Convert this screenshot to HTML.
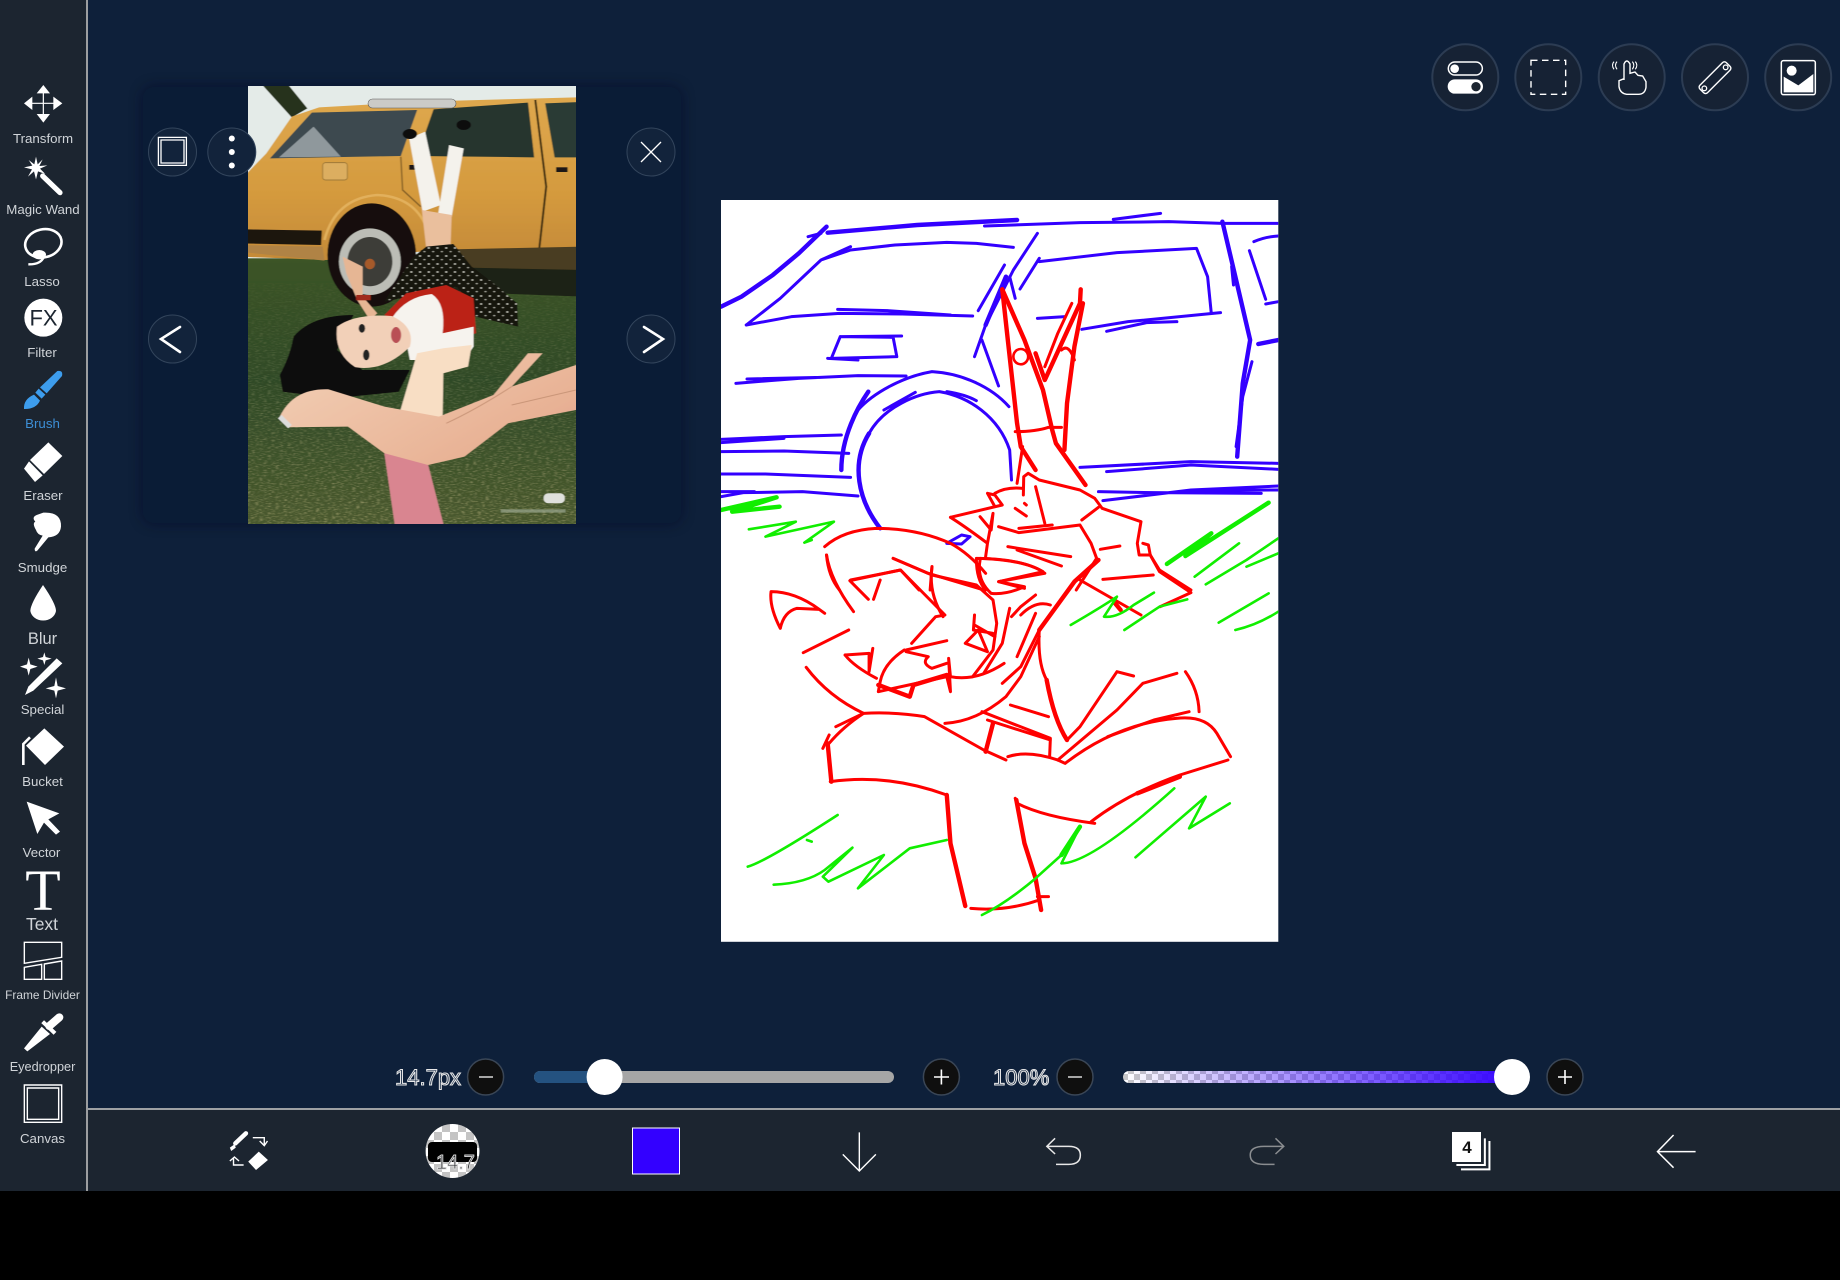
<!DOCTYPE html>
<html><head><meta charset="utf-8"><title>Drawing</title>
<style>
html,body{margin:0;padding:0;width:1840px;height:1280px;overflow:hidden;background:#000}
svg{position:absolute;left:0;top:0;display:block}
svg *{vector-effect:non-scaling-stroke}
text{font-family:"Liberation Sans",sans-serif}
.l{font-size:13.3px;fill:#d0d4d8;text-anchor:middle}
.o{font-size:22px;fill:#22344c;stroke:#e8e8e8;stroke-width:1px}
.b path{fill:none;stroke:#3300ff;stroke-width:3;stroke-linecap:round;stroke-linejoin:round}
.r path{fill:none;stroke:#ff0000;stroke-width:3;stroke-linecap:round;stroke-linejoin:round}
.g path{fill:none;stroke:#11ee00;stroke-width:2.6;stroke-linecap:round;stroke-linejoin:round}
.t{stroke-width:4.4 !important}
</style></head><body>
<svg width="1840" height="1280" viewBox="0 0 1840 1280" xmlns="http://www.w3.org/2000/svg">
<defs>
<clipPath id="cv"><rect x="721" y="200" width="557.3" height="741.8"/></clipPath>
<clipPath id="ph"><rect x="248" y="86" width="328" height="438"/></clipPath>
<filter id="bl" x="-5%" y="-5%" width="110%" height="110%"><feGaussianBlur stdDeviation="1.1"/></filter>
<filter id="sh" x="-10%" y="-10%" width="120%" height="120%"><feGaussianBlur stdDeviation="7"/></filter>
<filter id="tx" x="0" y="0" width="100%" height="100%"><feTurbulence type="fractalNoise" baseFrequency=".09 .28" numOctaves="2" seed="4"/><feColorMatrix values="0 0 0 0 .62  0 0 0 0 .54  0 0 0 0 .28  0 0 0 2 -.95"/></filter>
<linearGradient id="car" x1="0" y1="0" x2="0" y2="1"><stop offset="0" stop-color="#dfa84e"/><stop offset=".6" stop-color="#d49a3e"/><stop offset="1" stop-color="#c48a38"/></linearGradient>
<linearGradient id="gr" x1="0" y1="0" x2="0" y2="1"><stop offset="0" stop-color="#3c5426"/><stop offset=".45" stop-color="#2f4a27"/><stop offset="1" stop-color="#4b5a2e"/></linearGradient>
<linearGradient id="tg" x1="0" y1="0" x2="0" y2="1"><stop offset="0" stop-color="#fff" stop-opacity=".1"/><stop offset="1" stop-color="#fff" stop-opacity=".7"/></linearGradient>
<mask id="tm"><rect x="300" y="640" width="950" height="735" fill="url(#tg)"/></mask>
<linearGradient id="skin" x1="0" y1="0" x2="1" y2="1"><stop offset="0" stop-color="#f3d0b6"/><stop offset=".6" stop-color="#e8b295"/><stop offset="1" stop-color="#d98690"/></linearGradient>
<linearGradient id="op" x1="0" y1="0" x2="1" y2="0"><stop offset="0" stop-color="#3300ff" stop-opacity="0"/><stop offset="1" stop-color="#3300ff"/></linearGradient>
<pattern id="dots" width="24" height="24" patternUnits="userSpaceOnUse"><rect width="24" height="24" fill="#14140e"/><circle cx="6" cy="6" r="3" fill="#bdbdb2"/><circle cx="18" cy="17" r="2.6" fill="#a5a59a"/></pattern>
<pattern id="chk" width="12" height="12" patternUnits="userSpaceOnUse"><rect width="12" height="12" fill="#fff"/><rect width="6" height="6" fill="#c8c8c8"/><rect x="6" y="6" width="6" height="6" fill="#c8c8c8"/></pattern>
<pattern id="chk2" width="16" height="16" patternUnits="userSpaceOnUse" x="426" y="1124"><rect width="16" height="16" fill="#fff"/><rect width="8" height="8" fill="#c4c4c4"/><rect x="8" y="8" width="8" height="8" fill="#c4c4c4"/></pattern>
<clipPath id="sl2"><rect x="1123" y="1071" width="395" height="12" rx="6"/></clipPath>
</defs>

<!-- backgrounds -->
<rect width="1840" height="1191" fill="#0e203a"/>
<rect x="0" y="1191" width="1840" height="89" fill="#000"/>
<rect x="88" y="1110" width="1752" height="81" fill="#1c2530"/>
<rect x="88" y="1108" width="1752" height="2" fill="#9ea1a4"/>
<rect x="0" y="0" width="86" height="1191" fill="#1c2530"/>
<rect x="86" y="0" width="2" height="1191" fill="#9c9ea0"/>

<!-- reference panel -->
<rect x="143" y="87" width="538" height="436" rx="11" fill="#050f20" opacity=".55" filter="url(#sh)"/>
<rect x="143" y="87" width="538" height="436" rx="11" fill="#0a1c36"/>
<g clip-path="url(#ph)"><g transform="translate(130,70) scale(.3635,.3333)"><g filter="url(#bl)">
<rect x="300" y="30" width="950" height="1350" fill="#e4ebe8"/>
<rect x="300" y="565" width="950" height="810" fill="url(#gr)"/>
<g mask="url(#tm)"><rect x="300" y="640" width="950" height="735" filter="url(#tx)"/></g>
<polygon points="360,40 432,40 488,115 445,142" fill="#27301f"/>
<polygon points="300,335 375,250 445,140 520,112 800,95 1227,82 1250,82 1250,565 930,550 800,545 540,570 300,560" fill="url(#car)"/>
<polygon points="385,265 500,128 790,120 745,258" fill="#3d4a50"/>
<polygon points="410,262 505,170 580,260" fill="#8f989c"/>
<polygon points="835,118 1095,98 1112,262 790,258" fill="#27342f"/>
<polygon points="1142,100 1240,96 1240,262 1168,262" fill="#2c3b36"/>
<path d="M1115 90 L1145 350 L1125 545" fill="none" stroke="#3a2a10" stroke-width="2"/>
<path d="M745 260 L750 360 L800 410" fill="none" stroke="#8a6428" stroke-width="1.5"/>
<rect x="530" y="278" width="68" height="52" rx="8" fill="#dcae60" stroke="#a07a38" stroke-width="1"/>
<rect x="768" y="285" width="28" height="14" fill="#1c1812"/><rect x="1172" y="292" width="32" height="14" fill="#1c1812"/>
<polygon points="300,478 528,482 526,525 300,520" fill="#1d1610"/>
<polygon points="300,525 530,530 535,572 300,545" fill="#b08344"/>
<polygon points="800,540 1250,530 1250,620 1000,610 800,590" fill="#4a3d20"/>
<polygon points="780,590 1250,600 1250,680 1000,670 760,680" fill="#1c2013"/>
<path d="M535 510 Q565 385 680 375 Q780 380 815 470" fill="none" stroke="#e2b05c" stroke-width="2.6"/>
<ellipse cx="665" cy="555" rx="122" ry="155" fill="#14110c"/>
<ellipse cx="660" cy="575" rx="85" ry="100" fill="#bcbdb6"/>
<ellipse cx="660" cy="575" rx="62" ry="74" fill="#3c3c38"/>
<ellipse cx="660" cy="582" rx="14" ry="16" fill="#a65a2c"/>
<polygon points="768,205 812,185 855,405 805,425" fill="#f4f2ec"/>
<polygon points="878,225 918,235 885,440 848,430" fill="#f4f2ec"/>
<ellipse cx="770" cy="192" rx="20" ry="15" fill="#111"/><ellipse cx="918" cy="165" rx="20" ry="15" fill="#111"/>
<polygon points="803,420 885,435 882,525 815,535" fill="#eabf9d"/>
<polygon points="815,530 890,522 940,590 1000,640 1065,700 1068,770 950,740 900,650 700,695 780,560" fill="url(#dots)"/>
<polygon points="700,735 760,670 870,645 945,685 952,790 820,835 760,760" fill="#bb2418"/>
<path d="M722 742 Q760 680 830 672 Q870 700 860 790 L945 770 L945 830 L920 870 L770 870 L750 760Z" fill="#f6f3ee"/>
<path d="M585 560 L640 590 L640 680 L680 730 L660 750 L625 690 L595 610Z" fill="#e6b694"/>
<rect x="622" y="675" width="40" height="16" fill="#a02a1e"/>
<path d="M450 800 Q500 735 615 735 L570 840 L640 900 L770 900 L740 965 L560 985 L420 965 L412 915 Q440 860 450 800Z" fill="#0f0c0c"/>
<path d="M570 770 Q620 730 720 738 Q785 770 770 830 Q700 905 620 892 Q560 850 570 770Z" fill="#f2d0b8"/>
<ellipse cx="638" cy="775" rx="9" ry="13" fill="#222"/><ellipse cx="650" cy="855" rx="9" ry="16" fill="#222"/>
<ellipse cx="732" cy="795" rx="14" ry="24" fill="#b94f55"/>
<path d="M790 850 L862 835 L940 825 L930 890 L862 910 L860 1045 L740 1035Z" fill="#f8dec4"/>
<path d="M412 1040 Q450 955 545 958 L700 1010 L850 1040 L1000 975 L1095 850 L1135 850 L1050 950 L1227 885 L1250 900 L1250 1015 L1040 1060 L920 1160 L820 1185 L865 1375 L730 1375 L700 1150 L600 1070 L435 1072Z" fill="url(#skin)"/>
<path d="M700 1150 L820 1185 L865 1375 L730 1375Z" fill="#d98590"/>
<path d="M1050 950 Q950 1020 870 1060 M1227 960 L1050 1005" fill="none" stroke="#c99578" stroke-width="1"/>
<path d="M412 1040 L440 1070" stroke="#dcdcdc" stroke-width="5" fill="none"/>
<rect x="1138" y="1270" width="58" height="30" rx="13" fill="#dfe0dc"/>
<rect x="1020" y="1318" width="178" height="10" fill="#a9b4a0" opacity=".6"/>
</g></g></g>
<rect x="368" y="99" width="88" height="9" rx="4.5" fill="#cbcbc7" stroke="#5a5a58" stroke-width=".6"/>
<g fill="#12233b" stroke="#33455c" stroke-width="1">
<circle cx="172.5" cy="152" r="24"/><circle cx="231.8" cy="152" r="24"/><circle cx="651" cy="152" r="24"/><circle cx="172.5" cy="339" r="24"/><circle cx="651" cy="339" r="24"/>
</g>
<g fill="none" stroke="#fff">
<rect x="158.4" y="137.4" width="28" height="28" stroke-width="1.3"/><rect x="161" y="140" width="23" height="23" stroke-width="1.3"/>
<path d="M641 142 L661 162 M661 142 L641 162" stroke-width="1.3"/>
<path d="M180 327 L161 339 L180 352" stroke-width="2.6" stroke-linecap="round"/>
<path d="M644 327 L663 339 L644 352" stroke-width="2.6" stroke-linecap="round"/>
</g>
<circle cx="231.8" cy="138.5" r="3" fill="#fff"/><circle cx="231.8" cy="152" r="3" fill="#fff"/><circle cx="231.8" cy="165.5" r="3" fill="#fff"/>

<!-- top-right toolbar -->
<g fill="#162234" stroke="#2c3c53" stroke-width="2">
<circle cx="1465.3" cy="77.3" r="33"/><circle cx="1548.3" cy="77.3" r="33"/><circle cx="1631.7" cy="77.3" r="33"/><circle cx="1715" cy="77.3" r="33"/><circle cx="1798.2" cy="77.3" r="33"/>
</g>
<g transform="translate(1400,30) scale(.33333)">
<rect x="145" y="96" width="102" height="39" rx="19.5" fill="none" stroke="#fff" stroke-width="1.5"/>
<circle cx="164" cy="116" r="13" fill="#fff"/>
<rect x="143" y="148" width="106" height="43" rx="21.5" fill="#fff"/>
<circle cx="228" cy="170" r="14" fill="#1c2530"/>
<path d="M393 91 H497 V193 H393Z" fill="none" stroke="#fff" stroke-width="1.4" stroke-dasharray="6.5 4.5"/>
<path d="M672 150 V102 Q680 84 690 102 V130 L705 126 L714 136 L728 138 L738 155 V172 Q735 193 715 193 H680 Q660 190 657 170 V152 L672 146" fill="none" stroke="#fff" stroke-width="1.4"/>
<path d="M651 95 Q642 105 651 118 M642 95 Q633 105 642 118 M697 95 Q706 105 697 118 M706 95 Q715 105 706 118" fill="none" stroke="#fff" stroke-width="1.1"/>
<rect x="-56" y="-16" width="112" height="32" rx="8" transform="translate(945,143) rotate(-45)" fill="none" stroke="#fff" stroke-width="1.4"/>
<circle cx="913" cy="175" r="7" fill="none" stroke="#fff" stroke-width="1.3"/><circle cx="977" cy="112" r="7" fill="none" stroke="#fff" stroke-width="1.3"/>
<rect x="1144" y="92" width="102" height="102" rx="6" fill="none" stroke="#fff" stroke-width="1.5"/>
<circle cx="1175" cy="122" r="15" fill="#fff"/>
<path d="M1151 187 V140 L1195 166 L1240 132 V187Z" fill="#fff"/>
</g>

<!-- side toolbar icons -->
<g fill="#fff" stroke="none">
<g transform="translate(0,60) scale(.33333)">
<path d="M130 75 L150 100 L110 100Z M130 188 L110 162 L150 162Z M72 130 L97 110 L97 150Z M187 130 L160 110 L160 150Z"/>
<path d="M130 95 V165 M95 130 H165" stroke="#fff" stroke-width="1.2" fill="none"/>
<path d="M108 290 L113 313 L128 298 L118 318 L142 316 L120 326 L136 342 L114 334 L108 358 L102 334 L84 350 L96 328 L72 322 L97 317 L86 300 L103 313Z"/>
<path d="M128 348 L180 398" stroke="#fff" stroke-width="5.2" stroke-linecap="round" fill="none"/>
<ellipse cx="130" cy="550" rx="55" ry="42" transform="rotate(-12 130 550)" fill="none" stroke="#fff" stroke-width="2.6"/>
<ellipse cx="118" cy="584" rx="20" ry="14"/>
<path d="M85 613 Q122 614 132 590" fill="none" stroke="#fff" stroke-width="2.4"/>
<circle cx="130" cy="773" r="57"/>
<path d="M172 933 Q190 930 186 948 L140 1000 L120 982Z" fill="#3d9ded"/>
<path d="M116 986 L136 1004 L125 1016 L106 998Z" fill="#3d9ded"/>
<path d="M72 1047 Q70 1018 102 1004 L120 1022 Q108 1048 72 1047Z" fill="#3d9ded"/>
<path d="M145 1147 L187 1188 L132 1242 L90 1200Z"/>
<path d="M87 1204 L128 1246 L105 1266 L72 1226Z"/>
</g>
<g transform="translate(0,480) scale(.33333)">
<path d="M130 98 Q185 95 183 140 Q180 170 145 172 L112 212 Q104 218 104 206 L128 167 Q112 164 108 150 Q96 130 106 125 Q94 112 110 105Z"/>
<path d="M129 315 Q168 372 168 393 A39 34 0 0 1 91 393 Q91 372 129 315Z"/>
<path d="M170 535 L187 550 L100 632 L75 645 L85 620Z"/>
<path d="M86 533 L91 553 L113 560 L91 567 L86 587 L81 567 L60 560 L81 553Z M133 517 L137 531 L155 536 L137 541 L133 555 L129 541 L112 536 L129 531Z M168 592 L173 618 L198 625 L173 632 L168 655 L163 632 L137 625 L163 618Z"/>
<path d="M133 745 L192 800 L135 855 L78 797Z"/>
<path d="M70 855 V792 L90 772" fill="none" stroke="#fff" stroke-width="2.6"/>
<path d="M80 965 L178 1000 L145 1018 L180 1055 L168 1064 L132 1028 L112 1062Z"/>
</g>
<g transform="translate(0,880) scale(.33333)" fill="none" stroke="#fff" stroke-width="1.4">
<path d="M73 187 H185 V232 L73 250Z M73 262 L125 253 V298 H73Z M133 252 L185 243 V298 H133Z"/>
<path d="M72 505 L125 440 L150 462 L82 514Z" fill="#fff" stroke="none"/>
<path d="M128 425 L165 460" stroke-width="4"/>
<path d="M148 438 L178 412" stroke-width="8" stroke-linecap="round"/>
<rect x="73" y="615" width="112" height="112"/>
<rect x="82" y="624" width="94" height="94"/>
</g>
</g>
<text x="43" y="910" text-anchor="middle" style="font-family:'Liberation Serif',serif;font-size:58px" fill="#fff">T</text>
<text x="43.5" y="325.5" text-anchor="middle" font-size="22" fill="#1c2530">FX</text>
<text class="l" x="43" y="143">Transform</text>
<text class="l" x="43" y="214">Magic Wand</text>
<text class="l" x="42" y="286">Lasso</text>
<text class="l" x="42" y="357">Filter</text>
<text class="l" x="42.5" y="428" style="fill:#3d8fd6">Brush</text>
<text class="l" x="43" y="500">Eraser</text>
<text class="l" x="42.5" y="572">Smudge</text>
<text class="l" x="42.5" y="644" style="font-size:16.5px">Blur</text>
<text class="l" x="42.5" y="714">Special</text>
<text class="l" x="42.5" y="786">Bucket</text>
<text class="l" x="41.5" y="857">Vector</text>
<text class="l" x="42" y="930" style="font-size:17.5px">Text</text>
<text class="l" x="42.5" y="999" style="font-size:11.9px">Frame Divider</text>
<text class="l" x="42.5" y="1071" style="font-size:12.7px">Eyedropper</text>
<text class="l" x="42.5" y="1143">Canvas</text>

<!-- canvas -->
<rect x="721" y="200" width="557.3" height="741.8" fill="#fff"/>
<g clip-path="url(#cv)">
<g transform="translate(710,190) scale(.36996,.33333)">
<g class="b">
<path class="t" d="M318 128 L560 105 L830 90"/>
<path d="M742 108 L1000 98 L1240 95 L1385 100 L1536 100 M1090 88 L1218 70"/>
<path class="t" d="M30 350 L85 320 L170 255 L240 190 L315 110"/><path d="M265 140 L300 130"/>
<path d="M98 405 L190 325 L300 210 L380 170"/>
<path d="M305 208 L380 180 L500 165 L640 157 L720 160 L820 172"/>
<path d="M98 405 L220 380 L350 370 L520 372 L710 378 M345 358 L480 362 L650 375"/>
<path d="M352 440 L328 505 L505 500 L495 442 L352 440 L518 438 M318 505 L400 510"/>
<path d="M70 580 L240 565 L400 557 L530 558 M100 567 L300 562"/>
<path class="t" d="M355 840 C355 740 400 650 428 605"/>
<path d="M400 660 C440 610 520 560 600 545 C680 550 760 590 808 650"/>
<path class="t" d="M460 1015 C400 930 380 820 430 730"/>
<path d="M430 730 C470 650 560 610 620 605 C700 620 780 680 810 780 L815 870 M470 660 L555 607 M640 605 C670 610 700 620 720 632"/>
<path d="M30 748 L200 740 L355 735 M30 758 L200 745 M30 785 L200 783 L375 790 M30 852 L150 852 L380 862 M30 920 L90 908 L250 905 L400 918 M30 905 L120 905"/>
<path d="M890 215 L1100 188 L1315 175 L1345 260 L1355 370 M885 385 L960 380 M1005 418 L1130 395 L1380 368 M1072 424 L1180 398 L1262 395"/>
<path class="t" d="M1385 95 L1420 260 L1460 450 L1440 580 L1425 800"/>
<path d="M1410 230 L1415 285 M1465 515 L1440 620 L1422 770"/>
<path d="M1470 155 Q1500 140 1536 138 M1458 182 L1502 328 M1502 342 L1536 335"/>
<path class="t" d="M1482 462 L1536 450"/>
<path d="M885 130 L820 240 L745 405 L715 500 M796 225 L725 362 M890 205 L838 297 M735 450 L780 588 M810 260 L825 325"/>
<path class="t" d="M800 260 L745 405"/>
<path d="M1000 832 L1300 815 L1536 820 M1072 845 L1300 825 L1536 838 M1050 905 L1200 908 L1490 910 M1062 932 L1300 900 L1536 888 M1300 902 L1536 900"/>
<path d="M640 1060 L680 1035 L703 1040 L680 1062Z"/>
</g>
<g class="g">
<path class="t" d="M30 960 L180 922 L60 965 L188 950"/>
<path d="M105 1018 L232 995 L150 1040 L335 995 L255 1058 L275 1050"/>
<path class="t" d="M1235 1122 L1355 1030 L1285 1098 L1510 938"/>
<path d="M1310 1160 L1430 1060 M1340 1183 L1450 1110 L1536 1045 M1450 1130 L1536 1090"/>
</g>
<g class="r">
<path class="t" d="M790 298 L805 450 L830 700 L840 770 L880 840"/>
<path class="t" d="M790 298 L850 450 L900 600 L925 720 L935 760 L1015 885"/>
<path class="t" d="M1002 298 L1000 340 L905 570 L880 490"/>
<path d="M978 340 L940 430 L905 530"/>
<path class="t" d="M1008 340 L985 470 L965 640 L958 780"/>
<path d="M825 725 Q880 725 915 712 L950 712"/>
<ellipse cx="840" cy="500" rx="20" ry="23" fill="none" stroke="#f00" stroke-width="2.6"/>
<path d="M950 480 Q970 460 985 510"/>
<path d="M845 770 L830 880"/>
<path d="M847 915 L848 860 L860 850 L890 870 L1000 900 L1040 925 L1060 955 L1165 995 L1155 1060 L1160 1095 L1190 1095 L1185 1065 L1170 1060"/>
<path d="M1190 1095 L1215 1140 L1300 1200 M880 890 L905 1000 M1050 952 L1005 990"/>
<path d="M650 982 L790 945 L770 915 L750 910 L770 950 M770 910 Q800 890 845 895"/>
<path d="M650 982 Q690 1010 750 1060 L745 1100 M730 980 L760 1020 L765 970 L750 1060"/>
<path d="M780 1010 L835 1028 L1000 1005 L1030 1060 L1045 1105 L990 1200 M835 1015 L925 1005"/>
<path d="M1055 1078 L1108 1068 M825 955 L855 978 M850 940 L855 945 M805 1070 L975 1100 M830 1080 L950 1128 M1062 1168 L1198 1155"/>
<path d="M720 1105 C800 1105 870 1120 905 1150 L780 1175 L850 1195 M720 1105 Q720 1170 745 1200"/>
<path d="M310 1070 Q360 1020 450 1015 Q560 1015 650 1060 Q700 1090 745 1150"/>
<path d="M315 1095 Q320 1160 350 1200 M495 1105 L590 1150 L740 1200 M380 1170 L515 1140 L565 1200 M600 1130 L595 1200"/>
</g>
</g>
<g transform="translate(710,550) scale(.36996,.33333)">
<g class="r">
<path d="M315 15 Q325 90 388 185"/>
<path d="M378 92 L515 60 L635 195 L610 200 L545 280 M378 92 L428 148 M460 90 L442 148"/>
<path d="M495 25 L600 75 L720 105 L765 150 L775 220 L765 300 L710 380 M600 50 Q590 130 630 200"/>
<path d="M730 30 Q720 90 760 130 Q800 135 850 110 L780 95 L900 65 Q850 30 730 25"/>
<path class="t" d="M1050 30 L985 95 L890 240"/>
<path d="M890 240 Q885 340 910 390"/>
<path class="t" d="M910 390 Q930 510 965 570"/>
<path d="M965 570 L1000 530 L1100 365 L1145 378 M1000 90 L1165 195"/>
<path d="M715 195 L712 240 L765 250 M715 225 L770 260 M690 280 L750 305 L725 240 L690 280"/>
<path d="M810 175 L790 280 L740 370 M880 135 L840 170 L815 200 M840 195 Q880 150 920 165 M880 190 L830 320 M890 240 L840 350 L790 400"/>
<path d="M252 308 L375 240 M190 235 Q160 170 165 125 Q230 125 295 178 L235 175 Q200 185 190 235 M295 178 L310 190"/>
<path d="M365 315 Q390 350 450 385 M365 315 L430 310 L430 365 M440 295 L430 365"/>
<path d="M530 300 L640 272 M525 300 Q470 340 460 395 L455 425 L640 380 L650 425 L645 325 L650 380 Q720 395 795 340 M530 305 L590 320 Q570 340 600 355 L640 340"/>
<path class="t" d="M455 405 L540 440 L550 405 L640 375"/>
<path d="M260 352 Q320 440 415 490 M340 530 L415 490 Q500 485 580 500 L740 600 L800 630"/>
<path d="M322 555 L305 595 M415 490 Q360 530 322 580"/>
<path class="t" d="M318 580 L328 695"/>
<path d="M325 695 Q480 670 640 735"/>
<path class="t" d="M640 735 L650 880 L690 1068"/>
<path d="M705 1075 Q800 1085 890 1050"/>
<path class="t" d="M828 750 L850 880 L880 985 L895 1080"/>
<path d="M885 1040 L915 1040 M825 745 L830 760 Q900 800 1040 820"/>
<path d="M1030 815 Q1130 730 1270 675 L1400 630"/>
<path class="t" d="M1155 730 L1270 680"/>
<path d="M635 520 Q720 515 800 440 L840 380 L890 260"/>
<path d="M735 485 L920 565 L918 620 M750 510 L920 570"/>
<path class="t" d="M765 520 L745 605"/>
<path d="M805 620 Q860 600 940 630 L960 640 M960 640 Q1100 520 1260 505 Q1340 495 1370 550 L1407 620"/>
<path d="M940 630 L1100 480 L1170 400 L1262 370 M1075 560 L1200 510 L1295 485 M1285 365 Q1320 420 1322 485 M812 465 L915 500"/>
<path d="M1217 170 L1300 128 L1215 65 L1190 15"/>
<path class="t" d="M1095 160 L1110 180"/>
</g>
<g class="g">
<path d="M975 225 Q1060 170 1100 140 L1065 200 Q1100 205 1145 165 L1200 128 M1120 240 L1215 170 L1290 148"/>
<path d="M1375 218 L1510 130 M1420 240 Q1480 225 1536 185"/>
<path d="M102 950 Q150 935 345 795 M262 870 L275 875"/>
<path d="M172 1004 Q260 1000 310 960 L385 893 L305 980 L320 995 L470 915 L400 1015 L540 895 L640 870"/>
<path d="M735 1095 Q800 1060 880 985 L950 915"/>
<path class="t" d="M950 915 L1000 830"/>
<path d="M1000 830 L950 940 Q1030 940 1255 715 M1150 922 L1340 740 L1295 835 L1405 760"/>
</g>
</g>
</g>

<!-- sliders -->
<text class="o" x="395" y="1085">14.7px</text>
<g fill="#0f0f0f" stroke="#3a4656" stroke-width="1.5">
<circle cx="485.6" cy="1077" r="18"/><circle cx="941.4" cy="1077" r="18"/><circle cx="1075" cy="1077" r="18"/><circle cx="1565" cy="1077" r="18"/>
</g>
<g stroke="#d8d8d8" stroke-width="1.6" fill="none">
<path d="M479 1077 H493 M1068 1077 H1082"/>
<path d="M934 1077 H949 M941.4 1069.5 V1084.5 M1558 1077 H1572 M1565 1070 V1084" stroke="#fff"/>
</g>
<rect x="534" y="1071" width="360" height="12" rx="6" fill="#a6a6a6"/>
<path d="M540 1071 H604 V1083 H540 A6 6 0 0 1 540 1071Z" fill="#245280"/>
<circle cx="604.6" cy="1077" r="18" fill="#fff"/>
<text class="o" x="993" y="1085">100%</text>
<g clip-path="url(#sl2)"><rect x="1123" y="1071" width="395" height="12" fill="url(#chk)"/><rect x="1123" y="1071" width="395" height="12" fill="url(#op)"/></g>
<circle cx="1512" cy="1077" r="18" fill="#fff"/>

<!-- bottom bar -->
<g transform="translate(200,1105) scale(.45914,.33333)">
<path d="M100 85 L77 115" stroke="#fff" stroke-width="4.5" stroke-linecap="round" fill="none"/>
<path d="M65 128 L75 118 L78 128 L68 138Z" fill="#fff"/>
<path d="M128 140 L148 165 L122 195 L105 170Z" fill="#fff"/>
<path d="M115 98 H140 V120 M130 108 L140 122 L147 108" stroke="#fff" stroke-width="1.4" fill="none"/>
<path d="M95 180 H73 V158 M65 168 L75 156 L85 168" stroke="#fff" stroke-width="1.4" fill="none"/>
<path d="M1436 82 V198 M1400 148 L1436 198 L1472 148" stroke="#fff" stroke-width="1.4" fill="none"/>
</g>
<circle cx="452.5" cy="1151" r="27" fill="url(#chk2)"/>
<rect x="428" y="1142" width="49" height="20" rx="4" fill="#000"/>
<text x="436" y="1169" font-size="20" fill="#25272a" stroke="#ddd" stroke-width=".9">14.7</text>
<rect x="632.5" y="1128" width="47" height="46" fill="#3300ff" stroke="#fff" stroke-width="1"/>
<g transform="translate(1000,1105) scale(.45914,.33333)" fill="none">
<path d="M120 100 L102 124 L120 147 M102 124 H150 Q175 124 175 150 Q175 178 150 178 H122" stroke="#e8e8e8" stroke-width="1.5"/>
<path d="M600 100 L618 124 L600 147 M618 124 H575 Q545 124 545 150 Q545 178 575 178 H598" stroke="#8a8d90" stroke-width="1.5"/>
<path d="M1056 100 V180 H994" stroke="#fff" stroke-width="2"/>
<path d="M1066 108 V193 H1004" stroke="#fff" stroke-width="2"/>
<path d="M1467 90 L1432 140 L1467 188 M1432 140 H1515" stroke="#fff" stroke-width="1.5"/>
</g>
<rect x="1452" y="1132" width="29" height="30" fill="#fff"/>
<text x="1467" y="1153" text-anchor="middle" font-size="17" font-weight="bold" fill="#111">4</text>
</svg>
</body></html>
